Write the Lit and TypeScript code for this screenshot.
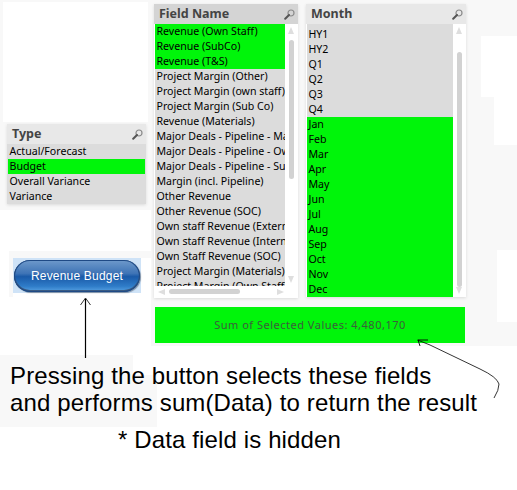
import { LitElement, html, css, svg } from "lit";
import { customElement } from "lit/decorators.js";

const FIELDS: [string, boolean][] = [
  ["Revenue (Own Staff)", true],
  ["Revenue (SubCo)", true],
  ["Revenue (T&S)", true],
  ["Project Margin (Other)", false],
  ["Project Margin (own staff)", false],
  ["Project Margin (Sub Co)", false],
  ["Revenue (Materials)", false],
  ["Major Deals - Pipeline - Materials", false],
  ["Major Deals - Pipeline - Own Staff", false],
  ["Major Deals - Pipeline - SubCo", false],
  ["Margin (incl. Pipeline)", false],
  ["Other Revenue", false],
  ["Other Revenue (SOC)", false],
  ["Own staff Revenue (External)", false],
  ["Own staff Revenue (Internal)", false],
  ["Own Staff Revenue (SOC)", false],
  ["Project Margin (Materials)", false],
  ["Project Margin (Own Staff)", false],
];
const MONTHS: [string, boolean][] = [
  ...["HY1", "HY2", "Q1", "Q2", "Q3", "Q4"].map((m): [string, boolean] => [m, false]),
  ...["Jan", "Feb", "Mar", "Apr", "May", "Jun", "Jul", "Aug", "Sep", "Oct", "Nov", "Dec"].map((m): [string, boolean] => [m, true]),
];
const TYPES: [string, boolean][] = [
  ["Actual/Forecast", false],
  ["Budget", true],
  ["Overall Variance", false],
  ["Variance", false],
];

const searchIcon = svg`<svg class="search" width="11" height="11" viewBox="0 0 11 11">
  <circle cx="7" cy="4" r="3" fill="none" stroke="#8a8a8a" stroke-width="1.2"/>
  <path d="M5 6 L1.2 9.8" stroke="#555" stroke-width="2" stroke-linecap="round"/>
</svg>`;

@customElement("app-root")
export class AppRoot extends LitElement {
  static styles = css`
    :host { display: block; width: 517px; height: 490px; overflow: hidden; background: #f8f8f8; font-family: "Noto Sans", sans-serif; }
    .stage { position: relative; width: 517px; height: 490px; }
    .patch { position: absolute; background: #fff; }
    .p1 { left: 3px; top: 2px; width: 145px; height: 120px; }
    .p2 { left: 0; top: 210px; width: 151px; height: 41px; }
    .p2b { left: 0; top: 251px; width: 9px; height: 46px; }
    .p2c { left: 0; top: 297px; width: 151px; height: 58px; }
    .p2d { left: 133px; top: 346px; width: 18px; height: 29px; }
    .p2e { left: 141px; top: 258px; width: 10px; height: 39px; }
    .p2f { left: 13px; top: 293px; width: 128px; height: 4px; }
    .p3 { left: 151px; top: 346px; width: 366px; height: 29px; }
    .p3b { left: 157px; top: 375px; width: 360px; height: 115px; }
    .p4 { left: 0; top: 427px; width: 157px; height: 63px; }
    .p5 { left: 481px; top: 36px; width: 36px; height: 61px; }
    .p6 { left: 494px; top: 97px; width: 23px; height: 48px; }
    .p7 { left: 497px; top: 250px; width: 20px; height: 72px; }
    .content { position: relative; padding-top: 4px; }
    .top { display: grid; grid-template-columns: 154px 152px 160px; height: 294px; }
    .left { display: flex; flex-direction: column; padding: 120px 0 0 7px; }
    .panel { background: #fff; box-shadow: 0 1px 3px rgba(0, 0, 0, 0.12); display: flex; flex-direction: column; }
    .type { width: 139px; height: 80px; }
    .field { width: 144px; height: 294px; }
    .month { width: 160px; height: 293px; }
    .head { height: 20px; box-sizing: border-box; flex: none; display: flex; align-items: center; justify-content: space-between; padding: 0 3px 2px 5px; background: #e8e8e8; color: #444; font: bold 12.5px "Noto Sans", sans-serif; }
    .field .head { background: #d4d4d4; }
    .search { display: block; margin-top: 2px; }
    .body { flex: 1; display: flex; min-height: 0; }
    .type .body { padding: 0 1px 0 1px; background: #dcdcdc; }
    .field .body { height: 262px; flex: none; padding-left: 1px; }
    .month .body { padding-left: 1px; }
    .list { flex: 1; min-width: 0; background: #dcdcdc; overflow: hidden; }
    .month .list { padding-top: 3px; }
    .row { height: 15px; line-height: 15px; padding-left: 1.5px; font-size: 10.6px; color: #000; white-space: nowrap; overflow: hidden; }
    .row span { position: relative; top: -0.5px; }
    .row.on { background: #00f50a; }
    .vbar { width: 12px; flex: none; display: flex; flex-direction: column; align-items: center; background: #fff; margin-right: 1px; }
    .thumb { width: 5px; background: #d2d2d2; border-radius: 3px; }
    .field .thumb { height: 139px; margin-top: 6px; }
    .month .thumb { height: 235px; margin-top: 18px; }
    .up, .down { width: 0; height: 0; border-left: 3.5px solid transparent; border-right: 3.5px solid transparent; flex: none; }
    .up { margin-top: 3px; border-bottom: 7px solid #dedede; }
    .down { margin-top: auto; margin-bottom: 3px; border-top: 7px solid #dedede; }
    .hbar { height: 11px; flex: none; display: flex; align-items: center; padding: 0 14px 0 4px; }
    .l, .r { width: 0; height: 0; border-top: 3.5px solid transparent; border-bottom: 3.5px solid transparent; flex: none; }
    .l { border-right: 7px solid #dedede; }
    .r { margin-left: auto; border-left: 7px solid #dedede; }
    .hthumb { width: 71px; height: 5px; margin-left: 4px; background: #d2d2d2; border-radius: 3px; }
    .btn-wrap { margin: 54px 0 0 6px; width: 128px; height: 35px; background: #cfe3f7; display: flex; align-items: center; justify-content: center; }
    .btn { width: 126px; height: 32px; border: none; padding: 0; border-radius: 16px; color: #fff; font: 12px "Liberation Sans", sans-serif; letter-spacing: 0.2px; box-shadow: inset 0 0 0 1px #1f4a85, inset 0 -1px 0 1px #3a5a82, 1px 1px 1px #7d8ea3;
      background: linear-gradient(#6f9acb 0%, #3f74b6 42%, #1a5aa8 52%, #2f7cc8 82%, #5aa4e4 100%); }
    .total { margin: 9px 0 0 155px; width: 310px; height: 36px; padding-bottom: 2px; box-sizing: border-box; background: #00f50a; color: #3c5e3c; font-size: 11px; letter-spacing: 0.5px; display: flex; align-items: center; justify-content: center; }
    .caption { margin: 19px 0 0 10px; font: 24px/27px "Liberation Sans", sans-serif; letter-spacing: 0.13px; color: #000; white-space: nowrap; position: relative; }
    .note { margin: 10px 0 0 118px; font: 24px/27px "Liberation Sans", sans-serif; letter-spacing: 0.13px; color: #000; white-space: nowrap; position: relative; }
    .ann { position: absolute; left: 0; top: 0; pointer-events: none; }
  `;

  private rows(items: [string, boolean][]) {
    return items.map(([t, on]) => html`<div class="row ${on ? "on" : ""}"><span>${t}</span></div>`);
  }

  render() {
    return html`<div class="stage">
      ${["p1", "p2", "p2b", "p2c", "p2d", "p2e", "p2f", "p3", "p3b", "p4", "p5", "p6", "p7"].map((p) => html`<div class="patch ${p}"></div>`)}
      <div class="content">
        <div class="top">
          <div class="left">
            <div class="panel type">
              <div class="head"><span>Type</span>${searchIcon}</div>
              <div class="body"><div class="list">${this.rows(TYPES)}</div></div>
            </div>
            <div class="btn-wrap"><button class="btn">Revenue Budget</button></div>
          </div>
          <div class="panel field">
            <div class="head"><span>Field Name</span>${searchIcon}</div>
            <div class="body">
              <div class="list">${this.rows(FIELDS)}</div>
              <div class="vbar"><div class="up"></div><div class="thumb"></div><div class="down"></div></div>
            </div>
            <div class="hbar"><div class="l"></div><div class="hthumb"></div><div class="r"></div></div>
          </div>
          <div class="panel month">
            <div class="head"><span>Month</span>${searchIcon}</div>
            <div class="body">
              <div class="list">${this.rows(MONTHS)}</div>
              <div class="vbar"><div class="up"></div><div class="thumb"></div><div class="down"></div></div>
            </div>
          </div>
        </div>
        <div class="total">Sum of Selected Values: 4,480,170</div>
        <div class="caption">Pressing the button selects these fields<br />and performs sum(Data) to return the result</div>
        <div class="note">* Data field is hidden</div>
      </div>
      <svg class="ann" width="517" height="490" viewBox="0 0 517 490" fill="none">
        <path d="M85.5 299 V358" stroke="#000" stroke-width="1.2"/>
        <path d="M80.5 305 L85.5 298 L90.5 305" stroke="#000" stroke-width="0.8"/>
        <path d="M417.5 340 L430 345 L480 369 Q497 377 499 384 Q499 390 494 398" stroke="#000" stroke-width="0.8"/>
        <path d="M418 340 H428 M418 340 L420 346" stroke="#000" stroke-width="0.9"/>
      </svg>
    </div>`;
  }
}
